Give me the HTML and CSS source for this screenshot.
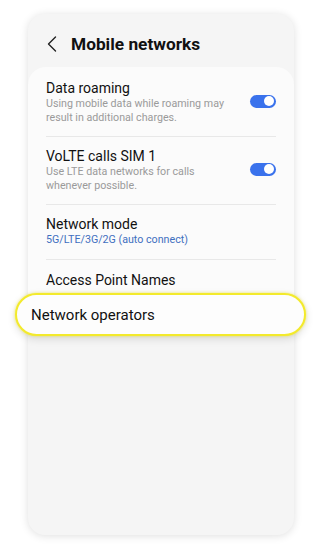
FILE: index.html
```html
<!DOCTYPE html>
<html>
<head>
<meta charset="utf-8">
<link rel="stylesheet" href="styles.css">
</head>
<body>
<div class="stage">
  <div class="phone">
    <div class="header">
      <svg class="back" width="10" height="16" viewBox="0 0 10 16"><path d="M8.5 1 L1.5 8 L8.5 15" fill="none" stroke="#222" stroke-width="1.4" stroke-linecap="round" stroke-linejoin="round"/></svg>
      <span class="title">Mobile networks</span>
    </div>
    <div class="card">
      <div class="row r1">
        <div class="text">
          <div class="name">Data roaming</div>
          <div class="sub">Using mobile data while roaming may result in additional charges.</div>
        </div>
        <div class="toggle"><div class="knob"></div></div>
      </div>
      <div class="row r2">
        <div class="text">
          <div class="name">VoLTE calls SIM 1</div>
          <div class="sub">Use LTE data networks for calls whenever possible.</div>
        </div>
        <div class="toggle"><div class="knob"></div></div>
      </div>
      <div class="row r3">
        <div class="text">
          <div class="name">Network mode</div>
          <div class="sub blue">5G/LTE/3G/2G (auto connect)</div>
        </div>
      </div>
      <div class="row r4 last">
        <div class="text">
          <div class="name">Access Point Names</div>
        </div>
      </div>
    </div>
  </div>
  <div class="pill">Network operators</div>
</div>
</body>
</html>
```
FILE: styles.css
```css
html, body {
  margin: 0;
  padding: 0;
  background: #ffffff;
  font-family: Roboto, "Liberation Sans", sans-serif;
}
.stage {
  position: relative;
  width: 321px;
  height: 549px;
  padding-top: 14px;
  box-sizing: border-box;
}
.phone {
  margin-left: 28px;
  width: 266px;
  height: 521px;
  background: #f5f5f5;
  border-radius: 17px;
  box-shadow: 0 1px 8px rgba(0,0,0,0.13);
  overflow: hidden;
}
.header {
  height: 53px;
  display: flex;
  align-items: center;
  padding-left: 19px;
  padding-top: 7px;
  box-sizing: border-box;
}
.back {
  display: block;
  margin-right: 14px;
}
.title {
  font-size: 17.3px;
  font-weight: 700;
  color: #111;
}
.card {
  background: #fbfbfb;
  border-radius: 18px;
  padding: 0 18px;
  height: 253px;
}
.row {
  display: flex;
  align-items: center;
  border-bottom: 1px solid #e8e8e8;
}
.row.last { border-bottom: none; }
.r1 { padding: 12px 0 11px; }
.r2 { padding: 10px 0 11px; }
.r3 { padding: 10px 0 12px; }
.r4 { padding: 11px 0 0; }
.text { flex: 1; }
.name {
  font-size: 14px;
  line-height: 18px;
  color: #111;
}
.sub {
  font-size: 10.7px;
  line-height: 14px;
  color: #9a9a9a;
  width: 192px;
}
.sub.blue { color: #3f6fc0; width: auto; }
.toggle {
  width: 26px;
  height: 13px;
  border-radius: 7px;
  background: #3a72ec;
  position: relative;
  margin-left: 10px;
  margin-top: -2px;
}
.knob {
  position: absolute;
  right: 2px;
  top: 1.5px;
  width: 10px;
  height: 10px;
  border-radius: 50%;
  background: #fff;
}
.pill {
  position: absolute;
  left: 15px;
  top: 293px;
  width: 291px;
  height: 43px;
  box-sizing: border-box;
  border: 2px solid #f3ea2c;
  border-radius: 22px;
  background: #fdfdfd;
  box-shadow: 0 0 3px rgba(240,228,0,0.6), 0 3px 8px rgba(0,0,0,0.12);
  display: flex;
  align-items: center;
  padding-left: 14px;
  font-size: 15px;
  color: #111;
}
```
